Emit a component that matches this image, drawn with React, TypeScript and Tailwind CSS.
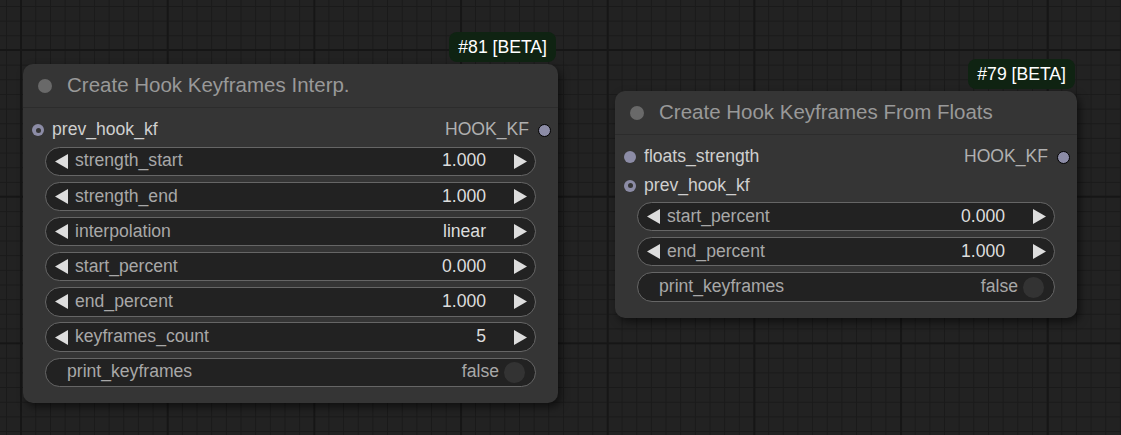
type Widget =
  | { kind: "number"; name: string; value: string }
  | { kind: "toggle"; name: string; value: string };

type Slot = { name: string; optional?: boolean; output?: string };

type NodeProps = {
  title: string;
  badge: string;
  className: string;
  slots: Slot[];
  widgets: Widget[];
};

function LeftArrow() {
  return (
    <svg width="13" height="15" viewBox="0 0 13 15" className="shrink-0">
      <path d="M0 7.5 L13 0 L13 15 Z" fill="#dddddd" />
    </svg>
  );
}

function RightArrow() {
  return (
    <svg width="13" height="15" viewBox="0 0 13 15" className="shrink-0">
      <path d="M13 7.5 L0 0 L0 15 Z" fill="#dddddd" />
    </svg>
  );
}

function InputDot({ optional }: { optional?: boolean }) {
  return (
    <span className="flex h-3 w-3 shrink-0 items-center justify-center rounded-full bg-[#8c8ca6]">
      {optional && <span className="h-[5px] w-[5px] rounded-full bg-[#353535]" />}
    </span>
  );
}

function WidgetRow({ widget }: { widget: Widget }) {
  if (widget.kind === "toggle") {
    return (
      <div className="flex h-[29.3px] items-center rounded-full border border-[#666] bg-[#222] pl-[21px] pr-[10px]">
        <span className="flex-1 text-[#a8a8a8]">{widget.name}</span>
        <span className="text-[#a8a8a8]">{widget.value}</span>
        <span className="ml-[5px] h-[21px] w-[21px] rounded-full bg-[#333]" />
      </div>
    );
  }
  return (
    <div className="flex h-[29.3px] items-center rounded-full border border-[#666] bg-[#222] pl-[9px] pr-[8px]">
      <LeftArrow />
      <span className="ml-[7px] flex-1 text-[#a8a8a8]">{widget.name}</span>
      <span className="text-[#dddddd]">{widget.value}</span>
      <span className="ml-[28px]">
        <RightArrow />
      </span>
    </div>
  );
}

function GraphNode({ title, badge, className, slots, widgets }: NodeProps) {
  return (
    <div
      className={`absolute rounded-[10px] bg-[#353535] shadow-[3px_4px_8px_rgba(0,0,0,0.55)] ${className}`}
    >
      <div className="absolute bottom-[calc(100%+2px)] right-[2px] rounded-[8px] bg-[#0f2312] px-[9px] py-[4px] text-[17.6px] leading-[22px] text-white">
        {badge}
      </div>

      <div className="flex h-[44px] items-center border-b border-[#2c2c2c] pl-[15px]">
        <span className="h-[14px] w-[14px] rounded-full bg-[#696969]" />
        <span className="ml-[15px] text-[20.5px] text-[#999]">{title}</span>
      </div>

      <div className="px-[22px] pb-[16px] pt-[8px] text-[17.6px] leading-none">
        {slots.map((slot) => (
          <div key={slot.name} className="-mx-[13px] flex h-[28.5px] items-center">
            <InputDot optional={slot.optional} />
            <span className="ml-[8px] flex-1 text-[#cfcfcf]">{slot.name}</span>
            {slot.output && (
              <>
                <span className="text-[#b0b0b0]">{slot.output}</span>
                <span className="ml-[9px] mr-[-2px] h-[13px] w-[13px] rounded-full border border-black bg-[#8c8ca6]" />
              </>
            )}
          </div>
        ))}
        <div className="mt-[2px] flex flex-col gap-[5.9px]">
          {widgets.map((w) => (
            <WidgetRow key={w.name} widget={w} />
          ))}
        </div>
      </div>
    </div>
  );
}

export default function App() {
  return (
    <div
      className="relative h-[435px] w-[1121px] overflow-hidden bg-[#222] font-['Liberation_Sans',Arial,sans-serif] bg-[image:linear-gradient(to_right,#161616_2px,transparent_2px),linear-gradient(to_bottom,#161616_2px,transparent_2px),linear-gradient(to_right,#1a1a1a_1px,transparent_1px),linear-gradient(to_bottom,#1a1a1a_1px,transparent_1px)] bg-[size:146.7px_146.7px,146.7px_146.7px,14.67px_14.67px,14.67px_14.67px] bg-[position:20px_49px,20px_49px,6px_6px,6px_6px]"
    >
      <GraphNode
        className="left-[23px] top-[64px] w-[535px]"
        title="Create Hook Keyframes Interp."
        badge="#81 [BETA]"
        slots={[{ name: "prev_hook_kf", optional: true, output: "HOOK_KF" }]}
        widgets={[
          { kind: "number", name: "strength_start", value: "1.000" },
          { kind: "number", name: "strength_end", value: "1.000" },
          { kind: "number", name: "interpolation", value: "linear" },
          { kind: "number", name: "start_percent", value: "0.000" },
          { kind: "number", name: "end_percent", value: "1.000" },
          { kind: "number", name: "keyframes_count", value: "5" },
          { kind: "toggle", name: "print_keyframes", value: "false" },
        ]}
      />
      <GraphNode
        className="left-[615px] top-[91px] w-[462px]"
        title="Create Hook Keyframes From Floats"
        badge="#79 [BETA]"
        slots={[
          { name: "floats_strength", output: "HOOK_KF" },
          { name: "prev_hook_kf", optional: true },
        ]}
        widgets={[
          { kind: "number", name: "start_percent", value: "0.000" },
          { kind: "number", name: "end_percent", value: "1.000" },
          { kind: "toggle", name: "print_keyframes", value: "false" },
        ]}
      />
    </div>
  );
}
